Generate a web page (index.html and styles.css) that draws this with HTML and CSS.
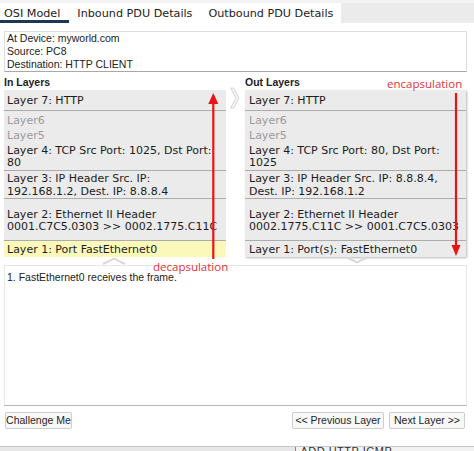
FILE: index.html
```html
<!DOCTYPE html>
<html>
<head>
<meta charset="utf-8">
<link rel="stylesheet" href="styles.css">
</head>
<body>
<div class="tabs">
  <div class="tab tab-first active">OSI Model</div>
  <div class="tab">Inbound PDU Details</div>
  <div class="tab">Outbound PDU Details</div>
</div>
<div class="main">
  <div class="info">At Device: myworld.com<br>Source: PC8<br>Destination: HTTP CLIENT</div>
  <div class="layers">
    <div class="col">
      <div class="col-title">In Layers</div>
      <div class="stack">
        <div class="row r7">Layer 7: HTTP</div>
        <div class="row r6 dim">Layer6</div>
        <div class="row r5 dim">Layer5</div>
        <div class="row r4">Layer 4: TCP Src Port: 1025, Dst Port:<br>80</div>
        <div class="row r3">Layer 3: IP Header Src. IP:<br>192.168.1.2, Dest. IP: 8.8.8.4</div>
        <div class="row r2">Layer 2: Ethernet II Header<br>0001.C7C5.0303 &gt;&gt; 0002.1775.C11C</div>
        <div class="row r1 current">Layer 1: Port FastEthernet0</div>
      </div>
    </div>
    <div class="col">
      <div class="col-title">Out Layers</div>
      <div class="stack stack-out">
        <div class="row r7">Layer 7: HTTP</div>
        <div class="row r6 dim">Layer6</div>
        <div class="row r5 dim">Layer5</div>
        <div class="row r4">Layer 4: TCP Src Port: 80, Dst Port:<br>1025</div>
        <div class="row r3">Layer 3: IP Header Src. IP: 8.8.8.4,<br>Dest. IP: 192.168.1.2</div>
        <div class="row r2">Layer 2: Ethernet II Header<br>0002.1775.C11C &gt;&gt; 0001.C7C5.0303</div>
        <div class="row r1">Layer 1: Port(s): FastEthernet0</div>
      </div>
    </div>
    <svg class="overlay" width="470" height="200" viewBox="0 0 470 200">
      <polygon points="226.5,16 229.5,16 235,26 229.5,36 226.5,36 232,26" fill="#f6f6f6" stroke="#d4d4d4" stroke-width="1"/>
      <polyline points="99,192 110,186.5 121,192" fill="none" stroke="#d9d9d9" stroke-width="2"/>
      <polyline points="343,185.5 353,190.5 363,185.5" fill="none" stroke="#d9d9d9" stroke-width="2"/>
      <line x1="209.3" y1="30" x2="209.3" y2="187" stroke="#ea1313" stroke-width="2.2"/>
      <polygon points="209.3,21 204.3,32 214.3,32" fill="#ea1313"/>
      <line x1="452" y1="21" x2="452" y2="174" stroke="#ea1313" stroke-width="2.2"/>
      <polygon points="447.5,173 456.5,173 452,184" fill="#ea1313"/>
    </svg>
    <span class="note note-enc">encapsulation</span>
    <span class="note note-dec">decapsulation</span>
  </div>
  <div class="message">1. FastEthernet0 receives the frame.</div>
  <div class="actions">
    <button class="btn btn-challenge">Challenge Me</button>
    <div class="nav">
      <button class="btn btn-prev">&lt;&lt; Previous Layer</button>
      <button class="btn btn-next">Next Layer &gt;&gt;</button>
    </div>
  </div>
</div>
<div class="band">
  <span class="band-left"></span>
  <span class="band-text">ADD HTTP ICMP</span>
</div>
</body>
</html>
```
FILE: styles.css
```css
html, body {
  margin: 0;
  padding: 0;
  overflow: hidden;
  background: #ffffff;
}
body {
  width: 474px;
  height: 451px;
  font-family: "Liberation Sans", Arial, sans-serif;
  font-size: 10.5px;
  color: #222222;
}
.tabs {
  display: flex;
  height: 20px;
  border-top: 3px solid #f3f3f3;
  background: #ebebeb;
}
.tab {
  box-sizing: border-box;
  height: 20px;
  padding: 5px 8px 0 8px;
  line-height: 12px;
  font-family: "DejaVu Sans", Verdana, sans-serif;
  font-size: 11.2px;
  color: #222222;
  background: #ffffff;
  border-bottom: 3px solid #ffffff;
}
.tab-first {
  padding-left: 4px;
  padding-right: 9px;
}
.tab.active {
  border-bottom-color: #1d3857;
}
.main {
  padding: 0 7px 0 4px;
}
.info {
  box-sizing: border-box;
  margin-top: 8px;
  height: 41px;
  padding: 0 2px;
  line-height: 13px;
  border: 1px solid #dcdcdc;
  border-bottom-color: #a9a9a9;
}
.layers {
  position: relative;
  display: grid;
  grid-template-columns: 222px 221px;
  column-gap: 19px;
}
.col-title {
  margin-top: 4px;
  height: 13px;
  line-height: 13px;
  font-weight: bold;
  margin-bottom: 1px;
}
.stack {
  background: #ebebeb;
  font-family: "DejaVu Sans", Verdana, sans-serif;
  font-size: 11px;
  color: #1c1c1c;
  white-space: nowrap;
}
.stack-out {
  box-shadow: 1px 1px 2px rgba(0, 0, 0, 0.28);
}
.row {
  padding-left: 3px;
}
.stack-out .row {
  padding-left: 4px;
}
.dim {
  color: #9b9b9b;
}
.r7 {
  padding-top: 4px;
  padding-bottom: 3px;
  line-height: 13px;
  border-bottom: 1px solid #acacac;
}
.r6 {
  padding-top: 2px;
  line-height: 15px;
}
.r5 {
  line-height: 15px;
}
.r4 {
  padding-top: 2px;
  padding-bottom: 1px;
  line-height: 12px;
  border-bottom: 1px solid #acacac;
}
.r3 {
  padding-top: 1px;
  line-height: 13px;
  border-bottom: 1px solid #acacac;
}
.r2 {
  padding-top: 10px;
  padding-bottom: 7px;
  line-height: 12px;
  border-bottom: 1px solid #acacac;
}
.r1 {
  padding-top: 2px;
  padding-bottom: 1px;
  line-height: 13px;
}
.current {
  background: #fbf9b9;
}
.overlay {
  position: absolute;
  left: 0;
  top: 0;
  pointer-events: none;
  z-index: 2;
}
.note {
  position: absolute;
  z-index: 3;
  font-family: "Open Sans", sans-serif;
  font-size: 11.5px;
  line-height: 14px;
  color: #e2323c;
  white-space: nowrap;
}
.note-enc {
  left: 383px;
  top: 5px;
}
.note-dec {
  left: 149px;
  top: 188px;
}
.message {
  box-sizing: border-box;
  margin-top: 8px;
  height: 141px;
  padding: 5px 2px;
  line-height: 13px;
  border: 1px solid #e8e8e8;
  border-bottom-color: #b5b5b5;
}
.actions {
  display: flex;
  justify-content: space-between;
  margin-top: 6px;
  padding: 0 2px 0 1px;
}
.nav {
  display: flex;
  gap: 5px;
}
.btn {
  box-sizing: border-box;
  height: 17px;
  margin: 0;
  padding: 0;
  font-family: "Liberation Sans", Arial, sans-serif;
  font-size: 10.5px;
  line-height: 15px;
  color: #1e1e1e;
  background: #f8f8f8;
  border: 1px solid #cdcdcd;
  border-radius: 2px;
  text-align: center;
}
.btn-challenge {
  width: 67px;
}
.btn-prev {
  width: 92px;
}
.btn-next {
  width: 76px;
}
.band {
  display: flex;
  margin-top: 17px;
  height: 4px;
  overflow: hidden;
  border-top: 1px solid #c6c6c6;
  background: #e7e7e7;
}
.band-left {
  width: 296px;
}
.band-text {
  font-family: "Liberation Sans", Arial, sans-serif;
  font-size: 11px;
  line-height: 11px;
  color: #333333;
  letter-spacing: 0.5px;
  margin-top: -1px;
  padding-left: 4px;
  border-left: 1px solid #888888;
  background: #f2f2f2;
  width: 174px;
}
```
